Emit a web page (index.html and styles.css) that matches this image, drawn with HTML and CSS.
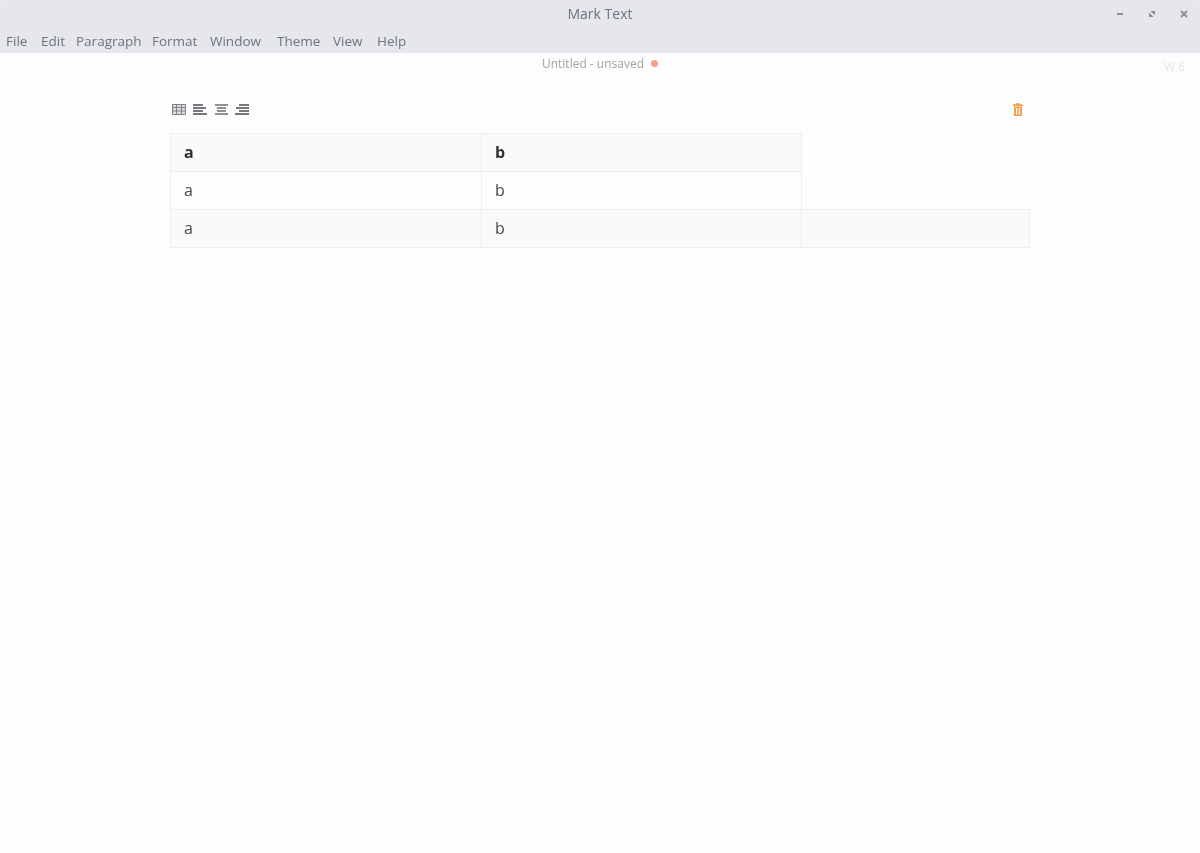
FILE: index.html
```html
<!DOCTYPE html>
<html lang="en">
<head>
<meta charset="utf-8">
<title>Mark Text</title>
<link rel="stylesheet" href="styles.css">
</head>
<body>
<header class="chrome">
  <div class="titlebar">
    <span class="app-title">Mark Text</span>
    <div class="win-controls">
      <svg class="win-icon" viewBox="0 0 8 8"><rect x="1" y="3" width="6" height="2" fill="#8b8d98"/></svg>
      <svg class="win-icon" viewBox="0 0 8 8"><path d="M2.5 1H7V5.5Z M1 2.5V7H5.5Z" fill="#8b8d98"/></svg>
      <svg class="win-icon" viewBox="0 0 8 8"><path d="M1 1L7 7M7 1L1 7" stroke="#8b8d98" stroke-width="1.8"/></svg>
    </div>
  </div>
  <nav class="menubar">
    <span>File</span><span>Edit</span><span>Paragraph</span><span>Format</span><span>Window</span><span>Theme</span><span>View</span><span>Help</span>
  </nav>
</header>
<main class="doc">
  <div class="status">
    <span class="filename">Untitled - unsaved</span>
    <span class="dot"></span>
    <span class="count">W 6</span>
  </div>
  <div class="editor">
    <div class="toolbar">
      <div class="tools">
        <svg class="tool" viewBox="0 0 14 12"><path d="M0.5 1.5H13.5V11.5H0.5ZM0.5 4.5H13.5M0.5 8H13.5M4.5 1.5V11.5M9.5 1.5V11.5" fill="#dcdcdf" stroke="#808287"/></svg>
        <svg class="tool" viewBox="0 0 14 12"><path d="M0 2H10M0 5H13M0 8H10M0 11H14" fill="none" stroke="#77787d" stroke-width="2"/></svg>
        <svg class="tool" viewBox="0 0 14 12"><path d="M1 2H14M3 5H12M3 8H12M1 11H14" fill="none" stroke="#909196" stroke-width="2"/></svg>
        <svg class="tool" viewBox="0 0 14 12"><path d="M4 2H14M1 5H14M4 8H14M0 11H14" fill="none" stroke="#77787d" stroke-width="2"/></svg>
      </div>
      <svg class="trash" viewBox="0 0 10 13"><path d="M3 1.2V0.2H7V1.2H10V3H0V1.2ZM1 3.6H9V13H1ZM3 5V11.5H4.2V5ZM5.8 5V11.5H7V5Z" fill="#f3a04f" fill-rule="evenodd"/></svg>
    </div>
    <table class="grid">
      <colgroup><col class="col-a"><col class="col-b"><col></colgroup>
      <tr class="shade"><th>a</th><th>b</th></tr>
      <tr><td>a</td><td>b</td></tr>
      <tr class="shade"><td>a</td><td>b</td><td></td></tr>
    </table>
  </div>
</main>
</body>
</html>
```
FILE: styles.css
```css
* { box-sizing: border-box; }
html, body { margin: 0; height: 100%; }
body {
  background: #fdfdfd;
  font-family: "Open Sans", "Noto Sans", sans-serif;
  overflow: hidden;
}
.chrome {
  height: 53px;
  background: #e6e7eb;
  color: #6d7285;
  border-radius: 2px 2px 0 0;
  will-change: transform;
}
.titlebar {
  height: 27px;
  display: flex;
  align-items: center;
  justify-content: center;
  position: relative;
}
.app-title { font-size: 14px; }
.win-controls {
  position: absolute;
  right: 12px;
  top: 10px;
  display: flex;
  gap: 24px;
}
.win-icon { width: 8px; height: 8px; display: block; }
.menubar {
  height: 26px;
  display: grid;
  grid-template-columns: 35px 35px 76px 58px 67px 56px 44px auto;
  align-items: center;
  padding: 1px 0 0 6px;
  font-size: 13.5px;
}
.doc { position: relative; will-change: transform; }
.status {
  height: 21px;
  display: flex;
  align-items: center;
  justify-content: center;
  gap: 7px;
  font-size: 12px;
  color: #a2a3a8;
}
.dot {
  width: 7px;
  height: 7px;
  border-radius: 50%;
  background: #f59e86;
}
.count {
  position: absolute;
  right: 15px;
  top: 5px;
  color: #e6e7eb;
}
.editor { width: 860px; margin: 0 auto; padding-top: 26px; }
.toolbar {
  height: 33px;
  display: flex;
  align-items: flex-start;
  justify-content: space-between;
  padding: 3px 7px 0 2px;
}
.tools { display: flex; gap: 7px; }
.tool { width: 14px; height: 12px; display: block; }
.trash { width: 10px; height: 13px; display: block; }
.grid {
  width: 860px;
  table-layout: fixed;
  border-collapse: collapse;
  font-size: 16px;
  color: #47474a;
}
.col-a { width: 311px; }
.col-b { width: 320px; }
.grid th, .grid td {
  height: 38px;
  padding: 0 13px 2px;
  border: 1px solid #ebedf3;
  text-align: left;
}
.grid th { font-weight: 700; color: #303133; }
.shade th, .shade td { background: #fafafa; }
```
